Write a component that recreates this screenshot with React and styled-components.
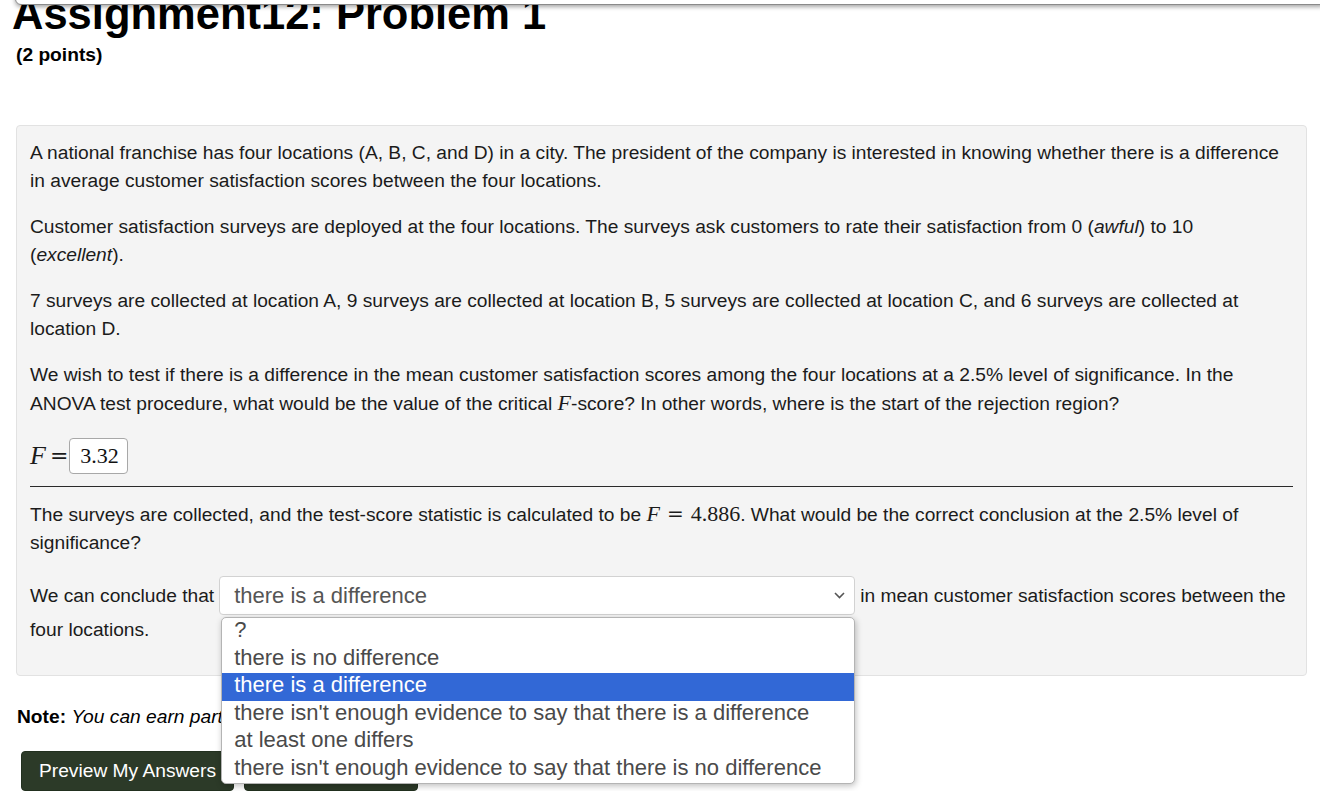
import React from "react";
import styled, { createGlobalStyle } from "styled-components";

const Global = createGlobalStyle`
  html, body { margin: 0; padding: 0; background: #fff; }
  body {
    font-family: "Liberation Sans", Arial, sans-serif;
    color: #1b1b1b;
    overflow: hidden;
  }
`;

const TopBar = styled.div`
  position: fixed;
  top: -40px;
  left: 15px;
  right: -6px;
  height: 43px;
  background: #fff;
  border: 1px solid #8a8a8a;
  border-radius: 6px;
  box-shadow: 0 2px 4px rgba(0, 0, 0, 0.35);
  z-index: 5;
`;

const Page = styled.main`
  padding: 0 13px 0 16px;
`;

const Title = styled.h1`
  margin: -12px 0 0 -4px;
  font-size: 43.5px;
  line-height: 1.2;
  font-weight: 700;
  color: #000;
`;

const Points = styled.div`
  margin-top: 1px;
  font-size: 19.2px;
  line-height: 28px;
  font-weight: 700;
  color: #000;
`;

const Panel = styled.section`
  margin-top: 56px;
  background: #f4f4f4;
  border: 1px solid #e2e2e2;
  border-radius: 4px;
  padding: 13px 13px 13px;
  font-size: 19.2px;
  line-height: 28px;
`;

const Para = styled.p`
  margin: 0 0 18px;
`;

const MathVar = styled.span`
  font-family: "Liberation Serif", "DejaVu Serif", serif;
  font-style: italic;
  font-size: ${(p) => p.$size || 22}px;
`;

const MathNum = styled.span`
  font-family: "Liberation Serif", "DejaVu Serif", serif;
  font-size: 22px;
`;

const MathEq = styled.span`
  font-family: "DejaVu Serif", "Liberation Serif", serif;
  font-size: ${(p) => p.$size || 20}px;
  margin: 0 ${(p) => p.$right ?? p.$gap ?? 5}px 0 ${(p) => p.$gap ?? 5}px;
`;

const AnswerRow = styled.div`
  display: flex;
  align-items: center;
  height: 40px;
  margin-top: 1px;
`;

const AnswerBox = styled.div`
  display: flex;
  align-items: center;
  height: 36px;
  width: 59px;
  box-sizing: border-box;
  padding-left: 10px;
  background: #fff;
  border: 1px solid #a8a8a8;
  border-radius: 4px;
  font-family: "Liberation Serif", "DejaVu Serif", serif;
  font-size: 22px;
  color: #111;
`;

const Rule = styled.hr`
  margin: 10px 0 13px;
  border: 0;
  border-top: 1px solid #2a2a2a;
`;

const ConcludeLine = styled.div`
  display: flex;
  align-items: center;
  gap: 5px;
  height: 41px;
  white-space: nowrap;
`;

const SelectWrap = styled.div`
  position: relative;
  flex: 0 0 636px;
`;

const SelectBox = styled.div`
  display: flex;
  align-items: center;
  justify-content: space-between;
  box-sizing: border-box;
  height: 39px;
  padding: 0 9px 0 14px;
  background: #fff;
  border: 1px solid #d2d2d2;
  border-radius: 4px;
  font-size: 22px;
  color: #555;
`;

const DropList = styled.ul`
  position: absolute;
  top: 41px;
  left: 2px;
  right: 0;
  margin: 0;
  padding: 0;
  list-style: none;
  background: #fff;
  border: 1px solid #b4b4b4;
  border-radius: 5px;
  box-shadow: 1px 2px 6px rgba(0, 0, 0, 0.25);
  overflow: hidden;
  z-index: 10;
`;

const Option = styled.li`
  height: 27.5px;
  box-sizing: border-box;
  line-height: 24px;
  padding: 0 0 3px 12px;
  font-size: 22px;
  color: ${(p) => (p.$selected ? "#fff" : "#4a4a4a")};
  background: ${(p) => (p.$selected ? "#3268d6" : "transparent")};
`;

const Note = styled.p`
  margin: 27px 0 0 1px;
  font-size: 19.2px;
  line-height: 28px;
  color: #000;
  b { font-weight: 700; }
  i { font-style: italic; }
`;

const Buttons = styled.div`
  display: flex;
  gap: 10px;
  margin: 20px 0 0 5px;
`;

const Button = styled.button`
  height: 40px;
  padding: 0 17px;
  background: #2c3a28;
  color: #fff;
  border: 1px solid #22301f;
  border-radius: 4px;
  font-family: "Liberation Sans", Arial, sans-serif;
  font-size: 19.2px;
  white-space: nowrap;
`;

const Chevron = () => (
  <svg width="11" height="7" viewBox="0 0 11 7" aria-hidden="true">
    <polyline points="1,1 5.5,5.5 10,1" fill="none" stroke="#555" strokeWidth="1.6" />
  </svg>
);

const options = [
  "?",
  "there is no difference",
  "there is a difference",
  "there isn't enough evidence to say that there is a difference",
  "at least one differs",
  "there isn't enough evidence to say that there is no difference",
];

export default function App() {
  return (
    <>
      <Global />
      <TopBar />
      <Page>
        <Title>Assignment12: Problem 1</Title>
        <Points>(2 points)</Points>
        <Panel>
          <Para>
            A national franchise has four locations (A, B, C, and D) in a city. The president of the company is interested in knowing whether there is a difference
            <br />
            in average customer satisfaction scores between the four locations.
          </Para>
          <Para>
            Customer satisfaction surveys are deployed at the four locations. The surveys ask customers to rate their satisfaction from 0 (<i>awful</i>) to 10
            <br />
            (<i>excellent</i>).
          </Para>
          <Para>
            7 surveys are collected at location A, 9 surveys are collected at location B, 5 surveys are collected at location C, and 6 surveys are collected at
            <br />
            location D.
          </Para>
          <Para>
            We wish to test if there is a difference in the mean customer satisfaction scores among the four locations at a 2.5% level of significance. In the
            <br />
            ANOVA test procedure, what would be the value of the critical <MathVar>F</MathVar>-score? In other words, where is the start of the rejection region?
          </Para>
          <AnswerRow>
            <MathVar $size={26}>F</MathVar>
            <MathEq $gap={4} $right={1} $size={22}>=</MathEq>
            <AnswerBox>3.32</AnswerBox>
          </AnswerRow>
          <Rule />
          <Para>
            The surveys are collected, and the test-score statistic is calculated to be <MathVar>F</MathVar>
            <MathEq $gap={7}>=</MathEq>
            <MathNum>4.886</MathNum>. What would be the correct conclusion at the 2.5% level of
            <br />
            significance?
          </Para>
          <Para>
            <ConcludeLine>
              <span>We can conclude that</span>
              <SelectWrap>
                <SelectBox>
                  <span>there is a difference</span>
                  <Chevron />
                </SelectBox>
                <DropList>
                  {options.map((o, i) => (
                    <Option key={o} $selected={i === 2}>
                      {o}
                    </Option>
                  ))}
                </DropList>
              </SelectWrap>
              <span>in mean customer satisfaction scores between the</span>
            </ConcludeLine>
            four locations.
          </Para>
        </Panel>
        <Note>
          <b>Note:</b> <i>You can earn partial credit on this problem.</i>
        </Note>
        <Buttons>
          <Button>Preview My Answers</Button>
          <Button>Submit Answers</Button>
        </Buttons>
      </Page>
    </>
  );
}
